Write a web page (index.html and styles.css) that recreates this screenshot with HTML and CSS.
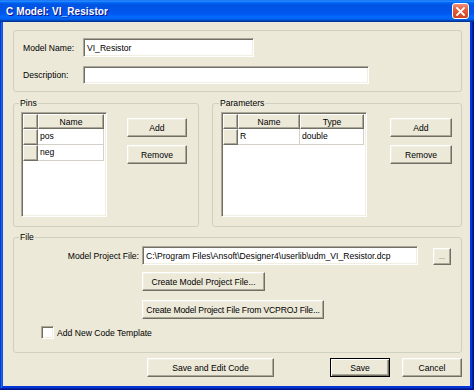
FILE: index.html
```html
<!DOCTYPE html>
<html lang="en">
<head>
    <meta charset="UTF-8">
    <title>C Model: VI_Resistor</title>
    <link rel="stylesheet" href="styles.css">
</head>
<body>
    <div class="window">
        <div class="titlebar">
            <span class="title">C Model: VI_Resistor</span>
            <button class="close" aria-label="Close">
                <svg width="9" height="9" viewBox="0 0 9 9"><path d="M1 1 L8 8 M8 1 L1 8" stroke="#fff" stroke-width="1.8" stroke-linecap="square"/></svg>
            </button>
        </div>

        <div class="client">
            <div class="group top-group">
                <div class="field-row">
                    <label class="field-label" for="model_name">Model Name:</label>
                    <input class="text name-input" type="text" id="model_name" value="VI_Resistor">
                </div>
                <div class="field-row">
                    <label class="field-label" for="description">Description:</label>
                    <input class="text desc-input" type="text" id="description">
                </div>
            </div>

            <div class="group-row">
                <fieldset class="group pins">
                    <legend>Pins</legend>
                    <div class="group-body">
                        <div class="grid pins-grid">
                            <div class="grid-row">
                                <span class="cell gutter"></span>
                                <span class="cell head pin-name">Name</span>
                            </div>
                            <div class="grid-row">
                                <span class="cell gutter"></span>
                                <span class="cell data pin-name">pos</span>
                            </div>
                            <div class="grid-row">
                                <span class="cell gutter"></span>
                                <span class="cell data pin-name">neg</span>
                            </div>
                        </div>
                        <div class="side-buttons pins-buttons">
                            <button class="btn">Add</button>
                            <button class="btn">Remove</button>
                        </div>
                    </div>
                </fieldset>

                <fieldset class="group params">
                    <legend>Parameters</legend>
                    <div class="group-body">
                        <div class="grid params-grid">
                            <div class="grid-row">
                                <span class="cell gutter"></span>
                                <span class="cell head param-name">Name</span>
                                <span class="cell head param-type">Type</span>
                            </div>
                            <div class="grid-row">
                                <span class="cell gutter"></span>
                                <span class="cell data param-name">R</span>
                                <span class="cell data param-type">double</span>
                            </div>
                        </div>
                        <div class="side-buttons params-buttons">
                            <button class="btn">Add</button>
                            <button class="btn">Remove</button>
                        </div>
                    </div>
                </fieldset>
            </div>

            <fieldset class="group file">
                <legend>File</legend>
                <div class="file-row">
                    <label class="file-label" for="project_file">Model Project File:</label>
                    <input class="text path-input" type="text" id="project_file" value="C:\Program Files\Ansoft\Designer4\userlib\udm_VI_Resistor.dcp">
                    <button class="btn browse">...</button>
                </div>
                <button class="btn create-btn">Create Model Project File...</button>
                <button class="btn create-btn vcproj-btn">Create Model Project File From VCPROJ File...</button>
                <div class="check-row">
                    <input type="checkbox" id="template" class="check">
                    <label for="template">Add New Code Template</label>
                </div>
            </fieldset>

            <div class="dialog-buttons">
                <button class="btn edit-btn">Save and Edit Code</button>
                <button class="btn default save-btn">Save</button>
                <button class="btn cancel-btn">Cancel</button>
            </div>
        </div>
    </div>
</body>
</html>
```

FILE: styles.css
```css
body {
    margin: 0;
    font-family: "Liberation Sans", Arial, sans-serif;
    font-size: 8.6px;
    color: #000;
    background: #ece9d8;
}

.window {
    width: 474px;
    height: 390px;
    display: flex;
    flex-direction: column;
    background: #0831d9;
    box-shadow: inset -1px -1px #00138c, inset 1px 1px #0831d9,
                inset -2px -2px #001ea0, inset 2px 2px #166aee,
                inset -3px -3px #003bda, inset 3px 3px #0855dd;
}

.titlebar {
    height: 22px;
    flex: none;
    display: flex;
    align-items: center;
    justify-content: space-between;
    padding: 0 5px 0 6px;
    background: linear-gradient(to bottom, #0058ee 0%, #3593ff 4%, #288eff 6%, #127dff 8%,
        #036ffc 10%, #0262ee 14%, #0057e5 20%, #0054e3 24%, #0055eb 56%, #005bf5 66%,
        #026afe 76%, #0062ef 86%, #0052d6 92%, #0040ab 94%, #003092 100%);
}

.title {
    color: #fff;
    font-weight: bold;
    font-size: 10px;
    letter-spacing: 0.1px;
    text-shadow: 1px 1px #0f1089;
}

.close {
    width: 17px;
    height: 16px;
    padding: 0;
    border: 1px solid #fff;
    border-radius: 3px;
    background: linear-gradient(to bottom, #f0907a, #e0603f 40%, #cf4420);
    display: flex;
    align-items: center;
    justify-content: center;
}

.client {
    flex: 1;
    margin: 0 4px 4px 3px;
    padding: 8px 8px 0 10px;
    background: #ece9d8;
    display: flex;
    flex-direction: column;
}

/* group boxes */
.group {
    margin: 0;
    border: 1px solid #d0d0bf;
    border-radius: 3px;
    box-sizing: border-box;
    min-width: 0;
}

.group legend {
    padding: 0 1px;
    margin-left: -2px;
    line-height: 10px;
}

.top-group {
    height: 62px;
    padding: 7px 9px;
    display: flex;
    flex-direction: column;
    gap: 9px;
}

.field-row {
    display: flex;
    align-items: center;
}

.field-label {
    width: 60px;
}

/* classic sunken edit box */
.text {
    box-sizing: border-box;
    margin: 0;
    padding: 0 3px;
    font-family: inherit;
    font-size: 8.6px;
    background: #fff;
    border: 1px solid;
    border-color: #aca899 #fff #fff #aca899;
    box-shadow: inset 1px 1px #716f64, inset -1px -1px #f1efe2;
    outline: none;
}

.name-input {
    width: 171px;
    height: 19px;
}

.desc-input {
    width: 286px;
    height: 18px;
}

.group-row {
    display: flex;
    gap: 13px;
    margin-top: 6px;
}

.pins, .params {
    height: 129px;
    padding: 4px 8px 8px 7px;
}

.pins {
    width: 186px;
}

.params {
    width: 250px;
    padding-left: 8px;
}

.group-body {
    display: flex;
}

/* list grids */
.grid {
    height: 105px;
    box-sizing: border-box;
    background: #fff;
    border: 1px solid;
    border-color: #aca899 #fff #fff #aca899;
    box-shadow: inset 1px 1px #716f64, inset -1px -1px #f1efe2;
    padding: 1px;
}

.pins-grid {
    width: 86px;
}

.params-grid {
    width: 146px;
}

.grid-row {
    display: flex;
}

.cell {
    box-sizing: border-box;
    height: 16px;
    line-height: 15px;
    padding: 0 2px;
    white-space: nowrap;
}

.grid-row:first-child .cell {
    height: 15px;
    line-height: 14px;
}

.gutter, .head {
    background: #ece9d8;
    border: 1px solid;
    border-color: #fff #716f64 #716f64 #fff;
    box-shadow: inset -1px -1px #aca899;
}

.gutter {
    width: 15px;
}

.head {
    text-align: center;
}

.data {
    border-right: 1px solid #d4d0c8;
    border-bottom: 1px solid #d4d0c8;
}

.pin-name {
    width: 66px;
}

.param-name {
    width: 62px;
}

.param-type {
    width: 64px;
}

.side-buttons {
    display: flex;
    flex-direction: column;
    gap: 8px;
    padding-top: 6px;
}

.pins-buttons {
    margin-left: 20px;
}

.pins-buttons .btn {
    width: 60px;
}

.params-buttons {
    margin-left: 23px;
}

.params-buttons .btn {
    width: 62px;
}

/* classic raised button */
.btn {
    box-sizing: border-box;
    height: 19px;
    margin: 0;
    padding: 0;
    font-family: inherit;
    font-size: 8.6px;
    white-space: nowrap;
    color: #000;
    background: #ece9d8;
    border: 1px solid;
    border-color: #fff #716f64 #716f64 #fff;
    box-shadow: inset -1px -1px #aca899, inset 1px 1px #f1efe2;
    cursor: pointer;
}

.btn.default {
    border: 1px solid #000;
    box-shadow: inset 1px 1px #fff, inset -1px -1px #716f64, inset -2px -2px #aca899;
}

.file {
    margin-top: 5px;
    height: 121px;
    padding: 4px 8px 0 7px;
}

.file-row {
    display: flex;
    align-items: center;
}

.file-label {
    width: 118px;
    text-align: right;
    margin-right: 3px;
}

.path-input {
    width: 276px;
    height: 19px;
}

.browse {
    width: 18px;
    height: 17px;
    margin-left: 15px;
    margin-top: 2px;
    font-size: 7px;
    color: #555;
}

.create-btn {
    display: block;
    width: 123px;
    margin: 7px 0 0 121px;
}

.vcproj-btn {
    width: 182px;
    margin-top: 9px;
    letter-spacing: -0.15px;
}

.check-row {
    display: flex;
    align-items: center;
    margin: 7px 0 0 20px;
}

.check {
    appearance: none;
    width: 13px;
    height: 13px;
    margin: 0 3px 0 0;
    background: #fff;
    border: 1px solid;
    border-color: #aca899 #fff #fff #aca899;
    box-shadow: inset 1px 1px #716f64, inset -1px -1px #f1efe2;
}

.dialog-buttons {
    display: flex;
    justify-content: flex-end;
    margin-top: 5px;
}

.edit-btn {
    width: 127px;
    margin-right: 56px;
}

.save-btn {
    width: 60px;
    margin-right: 12px;
}

.cancel-btn {
    width: 60px;
}
```
